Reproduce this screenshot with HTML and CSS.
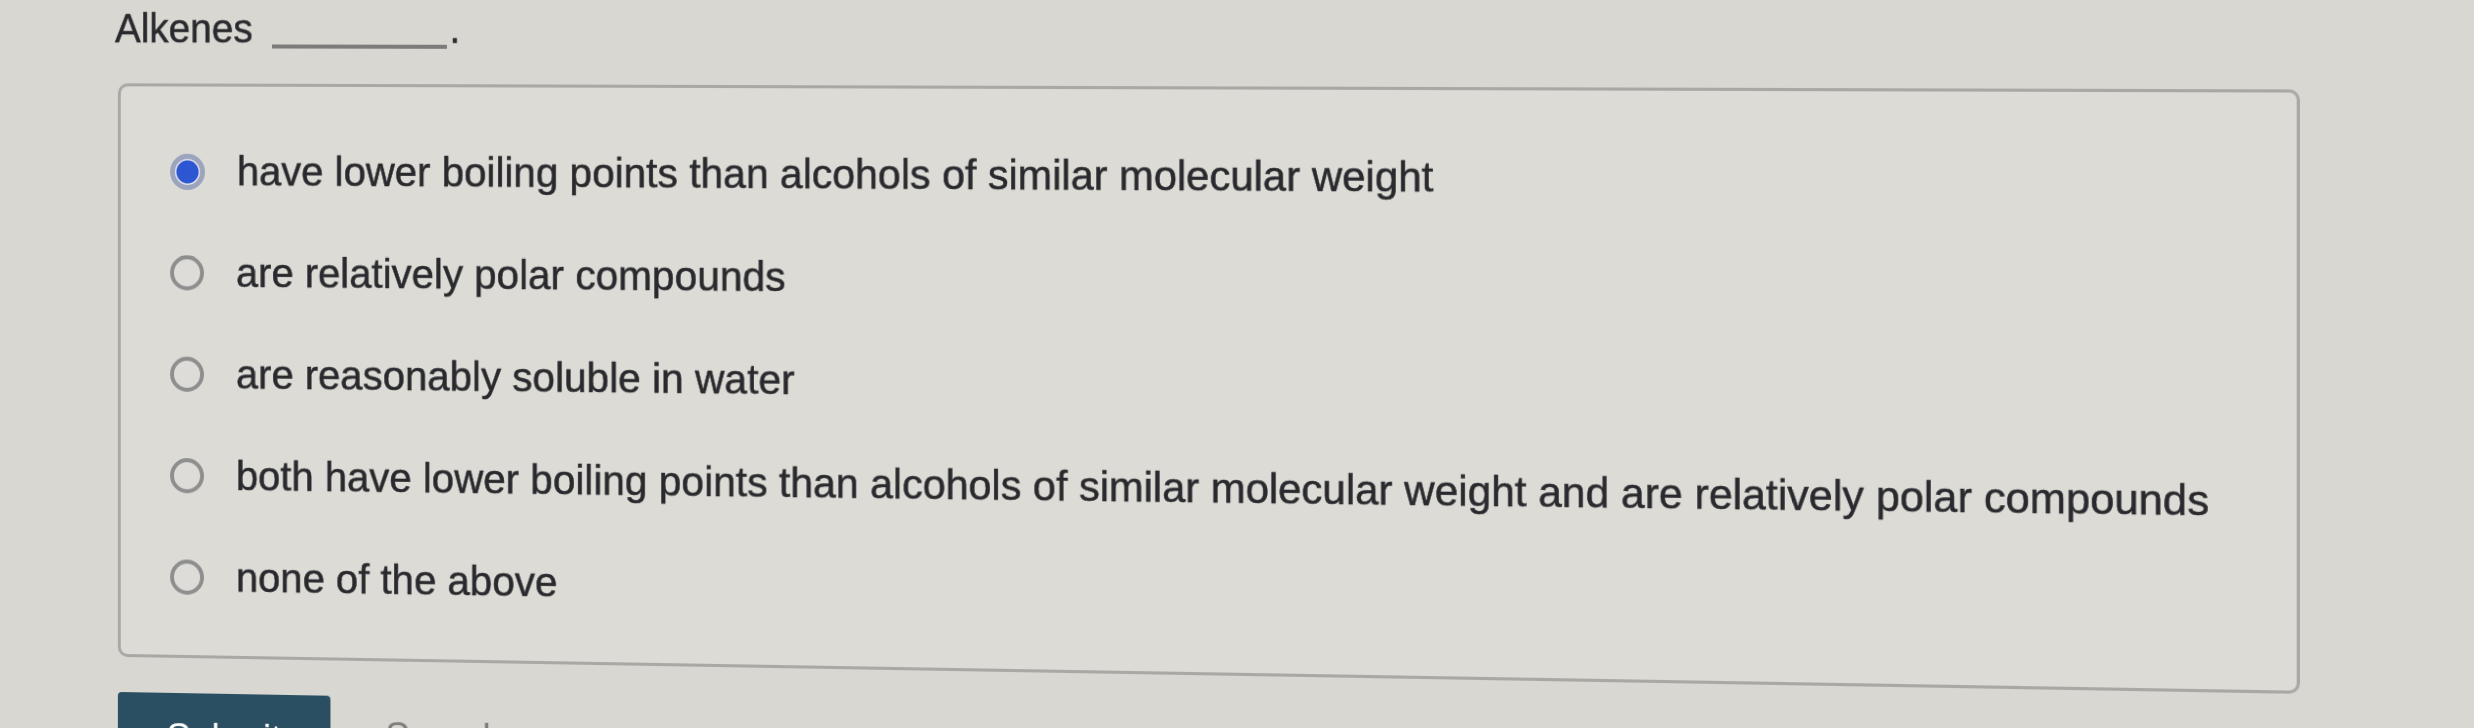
FILE: index.html
```html
<!DOCTYPE html>
<html lang="en">
<head>
  <meta charset="UTF-8">
  <title>Question 7</title>
  <link rel="stylesheet" href="styles.css">
</head>
<body>
  <div class="quiz">
    <p class="question">Alkenes <span class="blank"></span>.</p>

    <div class="answers">
      <label class="choice">
        <input type="radio" name="q7" checked>
        <span>have lower boiling points than alcohols of similar molecular weight</span>
      </label>
      <label class="choice">
        <input type="radio" name="q7">
        <span>are relatively polar compounds</span>
      </label>
      <label class="choice">
        <input type="radio" name="q7">
        <span>are reasonably soluble in water</span>
      </label>
      <label class="choice">
        <input type="radio" name="q7">
        <span>both have lower boiling points than alcohols of similar molecular weight and are relatively polar compounds</span>
      </label>
      <label class="choice">
        <input type="radio" name="q7">
        <span>none of the above</span>
      </label>
    </div>

    <div class="actions">
      <button class="btn-submit">Submit</button>
      <span class="save-note">Saved</span>
    </div>
  </div>
</body>
</html>
```

FILE: styles.css
```css
html, body {
  overflow: hidden;
}

body {
  margin: 0;
  background: #d8d7d2;
  font-family: 'Liberation Sans', Arial, sans-serif;
  color: #2a2a2e;
}

/* whole sheet is seen slightly from the left, so the right side comes out larger */
.quiz {
  padding: 9px 0 0 114px;
  transform-origin: 0 0;
  transform: matrix3d(0.96025, 0.000709, 0, -0.0000238, 0, 1, 0, 0, 0, 0, 1, 0, 8.08, 0, 0, 1);
}

.question {
  margin: 0 0 0 -3px;
  font-size: 40px;
  line-height: 39px;
  -webkit-text-stroke: 0.5px #2a2a2e;
}

.blank {
  display: inline-block;
  width: 179px;
  height: 4px;
  margin: 0 2px 0 9px;
  background: #7c7c7c;
  vertical-align: -6px;
}

.answers {
  width: 2144px;
  margin-top: 35px;
  padding: 34px 0 27px 51px;
  background: #dcdbd6;
  border: 3px solid #a8a8a4;
  border-radius: 10px;
  box-sizing: border-box;
}

.choice {
  display: flex;
  align-items: center;
  height: 101px;
  font-size: 41px;
  -webkit-text-stroke: 0.5px #2a2a2e;
  cursor: pointer;
}

.choice input {
  appearance: none;
  -webkit-appearance: none;
  flex: none;
  width: 35px;
  height: 35px;
  margin: 0 33px 0 0;
  border: 4px solid #8e8e8e;
  border-radius: 50%;
  background: #dddcd8;
  box-sizing: border-box;
}

.choice input:checked {
  width: 36px;
  height: 36px;
  border: 5px solid #9ba3bd;
  background: radial-gradient(circle, #2d56d2 0 11px, #e4e5ea 12px);
}

.actions {
  display: flex;
  align-items: flex-start;
  gap: 56px;
  margin-top: 35px;
}

.btn-submit {
  width: 219px;
  height: 80px;
  padding: 8px 0 0;
  font-family: inherit;
  font-size: 38px;
  line-height: 38px;
  color: #fff;
  background: #2b4f62;
  border: none;
  border-radius: 4px;
  cursor: pointer;
}

.save-note {
  margin-top: 20px;
  font-size: 38px;
  line-height: 38px;
  color: #7d7d7d;
}
```
